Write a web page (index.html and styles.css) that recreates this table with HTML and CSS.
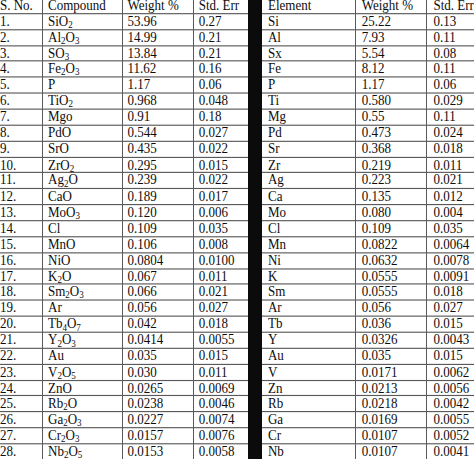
FILE: index.html
```
<!DOCTYPE html>
<html>
<head>
<meta charset="utf-8">
<link rel="stylesheet" href="styles.css">
</head>
<body>
<div class="sheet">
  <div class="grid left">
    <div class="c">S. No.</div><div class="c">Compound</div><div class="c">Weight %</div><div class="c">Std. Err</div>
    <div class="c">1.</div><div class="c">SiO<sub>2</sub></div><div class="c">53.96</div><div class="c">0.27</div>
    <div class="c">2.</div><div class="c">Al<sub>2</sub>O<sub>3</sub></div><div class="c">14.99</div><div class="c">0.21</div>
    <div class="c">3.</div><div class="c">SO<sub>3</sub></div><div class="c">13.84</div><div class="c">0.21</div>
    <div class="c">4.</div><div class="c">Fe<sub>2</sub>O<sub>3</sub></div><div class="c">11.62</div><div class="c">0.16</div>
    <div class="c">5.</div><div class="c">P</div><div class="c">1.17</div><div class="c">0.06</div>
    <div class="c">6.</div><div class="c">TiO<sub>2</sub></div><div class="c">0.968</div><div class="c">0.048</div>
    <div class="c">7.</div><div class="c">Mgo</div><div class="c">0.91</div><div class="c">0.18</div>
    <div class="c">8.</div><div class="c">PdO</div><div class="c">0.544</div><div class="c">0.027</div>
    <div class="c">9.</div><div class="c">SrO</div><div class="c">0.435</div><div class="c">0.022</div>
    <div class="c">10.</div><div class="c">ZrO<sub>2</sub></div><div class="c">0.295</div><div class="c">0.015</div>
    <div class="c">11.</div><div class="c">Ag<sub>2</sub>O</div><div class="c">0.239</div><div class="c">0.022</div>
    <div class="c">12.</div><div class="c">CaO</div><div class="c">0.189</div><div class="c">0.017</div>
    <div class="c">13.</div><div class="c">MoO<sub>3</sub></div><div class="c">0.120</div><div class="c">0.006</div>
    <div class="c">14.</div><div class="c">Cl</div><div class="c">0.109</div><div class="c">0.035</div>
    <div class="c">15.</div><div class="c">MnO</div><div class="c">0.106</div><div class="c">0.008</div>
    <div class="c">16.</div><div class="c">NiO</div><div class="c">0.0804</div><div class="c">0.0100</div>
    <div class="c">17.</div><div class="c">K<sub>2</sub>O</div><div class="c">0.067</div><div class="c">0.011</div>
    <div class="c">18.</div><div class="c">Sm<sub>2</sub>O<sub>3</sub></div><div class="c">0.066</div><div class="c">0.021</div>
    <div class="c">19.</div><div class="c">Ar</div><div class="c">0.056</div><div class="c">0.027</div>
    <div class="c">20.</div><div class="c">Tb<sub>4</sub>O<sub>7</sub></div><div class="c">0.042</div><div class="c">0.018</div>
    <div class="c">21.</div><div class="c">Y<sub>2</sub>O<sub>3</sub></div><div class="c">0.0414</div><div class="c">0.0055</div>
    <div class="c">22.</div><div class="c">Au</div><div class="c">0.035</div><div class="c">0.015</div>
    <div class="c">23.</div><div class="c">V<sub>2</sub>O<sub>5</sub></div><div class="c">0.030</div><div class="c">0.011</div>
    <div class="c">24.</div><div class="c">ZnO</div><div class="c">0.0265</div><div class="c">0.0069</div>
    <div class="c">25.</div><div class="c">Rb<sub>2</sub>O</div><div class="c">0.0238</div><div class="c">0.0046</div>
    <div class="c">26.</div><div class="c">Ga<sub>2</sub>O<sub>3</sub></div><div class="c">0.0227</div><div class="c">0.0074</div>
    <div class="c">27.</div><div class="c">Cr<sub>2</sub>O<sub>3</sub></div><div class="c">0.0157</div><div class="c">0.0076</div>
    <div class="c">28.</div><div class="c">Nb<sub>2</sub>O<sub>5</sub></div><div class="c">0.0153</div><div class="c">0.0058</div>
  </div>
  <div class="bar"></div>
  <div class="grid right">
    <div class="c">Element</div><div class="c">Weight %</div><div class="c">Std. Err</div>
    <div class="c">Si</div><div class="c">25.22</div><div class="c">0.13</div>
    <div class="c">Al</div><div class="c">7.93</div><div class="c">0.11</div>
    <div class="c">Sx</div><div class="c">5.54</div><div class="c">0.08</div>
    <div class="c">Fe</div><div class="c">8.12</div><div class="c">0.11</div>
    <div class="c">P</div><div class="c">1.17</div><div class="c">0.06</div>
    <div class="c">Ti</div><div class="c">0.580</div><div class="c">0.029</div>
    <div class="c">Mg</div><div class="c">0.55</div><div class="c">0.11</div>
    <div class="c">Pd</div><div class="c">0.473</div><div class="c">0.024</div>
    <div class="c">Sr</div><div class="c">0.368</div><div class="c">0.018</div>
    <div class="c">Zr</div><div class="c">0.219</div><div class="c">0.011</div>
    <div class="c">Ag</div><div class="c">0.223</div><div class="c">0.021</div>
    <div class="c">Ca</div><div class="c">0.135</div><div class="c">0.012</div>
    <div class="c">Mo</div><div class="c">0.080</div><div class="c">0.004</div>
    <div class="c">Cl</div><div class="c">0.109</div><div class="c">0.035</div>
    <div class="c">Mn</div><div class="c">0.0822</div><div class="c">0.0064</div>
    <div class="c">Ni</div><div class="c">0.0632</div><div class="c">0.0078</div>
    <div class="c">K</div><div class="c">0.0555</div><div class="c">0.0091</div>
    <div class="c">Sm</div><div class="c">0.0555</div><div class="c">0.018</div>
    <div class="c">Ar</div><div class="c">0.056</div><div class="c">0.027</div>
    <div class="c">Tb</div><div class="c">0.036</div><div class="c">0.015</div>
    <div class="c">Y</div><div class="c">0.0326</div><div class="c">0.0043</div>
    <div class="c">Au</div><div class="c">0.035</div><div class="c">0.015</div>
    <div class="c">V</div><div class="c">0.0171</div><div class="c">0.0062</div>
    <div class="c">Zn</div><div class="c">0.0213</div><div class="c">0.0056</div>
    <div class="c">Rb</div><div class="c">0.0218</div><div class="c">0.0042</div>
    <div class="c">Ga</div><div class="c">0.0169</div><div class="c">0.0055</div>
    <div class="c">Cr</div><div class="c">0.0107</div><div class="c">0.0052</div>
    <div class="c">Nb</div><div class="c">0.0107</div><div class="c">0.0041</div>
  </div>
</div>
</body>
</html>
```
FILE: styles.css
```
html, body {
  margin: 0;
  padding: 0;
  background: #fff;
  overflow: hidden;
}

body {
  width: 474px;
  height: 459px;
  font-family: "Liberation Serif", "Times New Roman", serif;
  font-size: 13px;
  color: #0d0d0d;
}

.sheet {
  display: flex;
  align-items: flex-start;
  width: max-content;
  margin-top: -3.44px;
  margin-left: -5px;
  transform: scaleY(1.15);
  transform-origin: 0 0;
}

.grid {
  flex: none;
  display: grid;
  grid-auto-rows: 12.87px;
  gap: 1px;
  padding-top: 1px;
  background: #5a5a5a;
  overflow: hidden;
}

.left {
  grid-template-columns: 47px 78.5px 70.2px 54.3px;
}

.right {
  grid-template-columns: 92.7px 70.8px 62px;
}

.c {
  background: #fff;
  padding-left: 5px;
  line-height: 12.87px;
  white-space: nowrap;
}

.right .c {
  padding-left: 6px;
}

.bar {
  flex: none;
  width: 14px;
  align-self: stretch;
  background: #0b0b0b;
}

sub {
  font-size: 9px;
  line-height: 0;
  vertical-align: -2px;
}
```
